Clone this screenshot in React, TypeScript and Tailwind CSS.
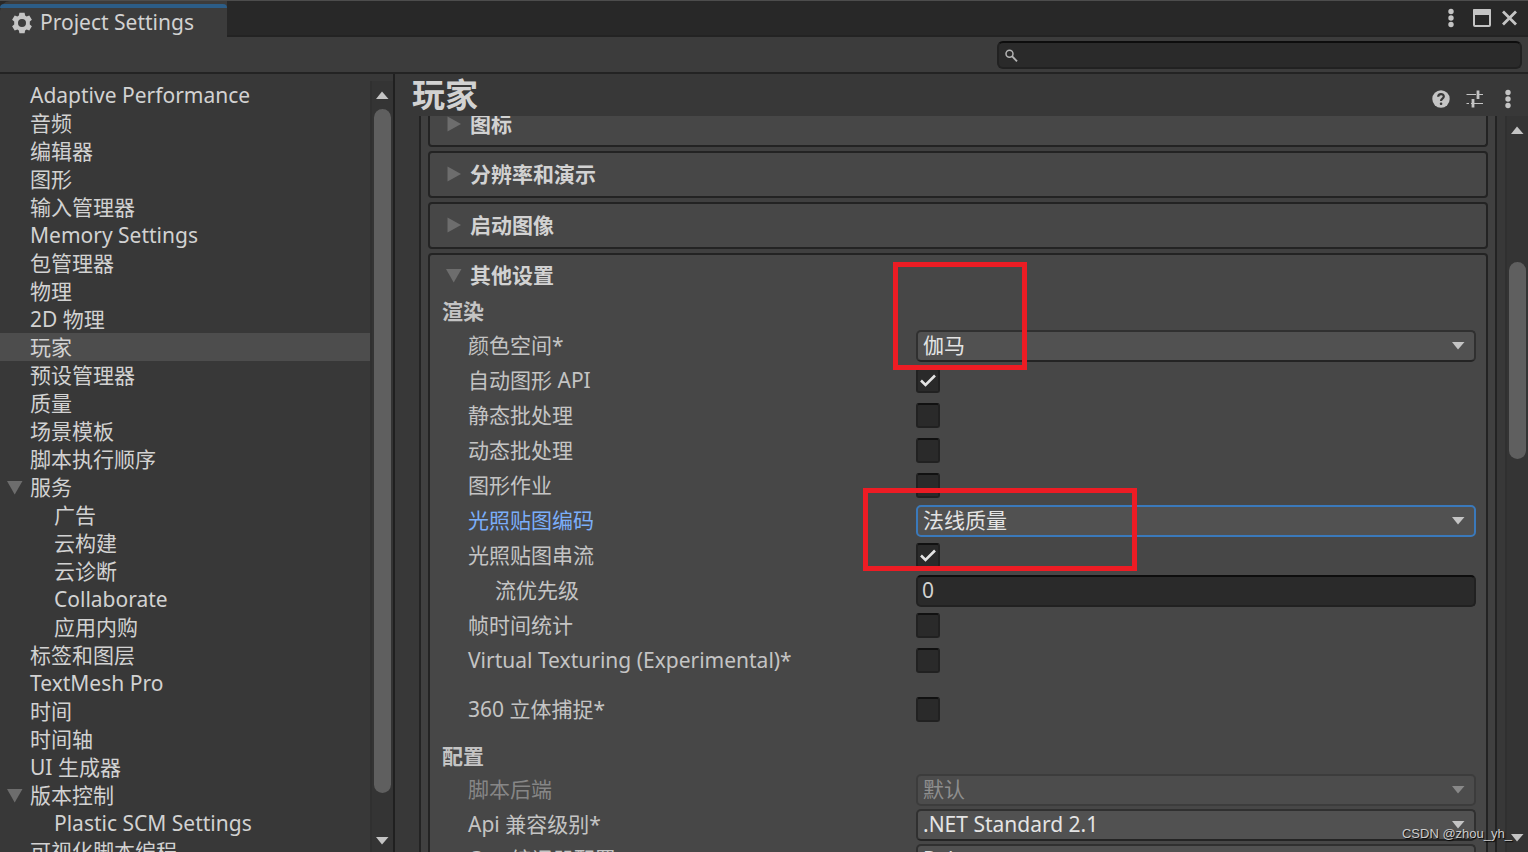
import { useState } from "react";
import type { ReactNode } from "react";

type NavItem = { label: string; level?: number; open?: boolean };

const NAV: NavItem[] = [
  { label: "Adaptive Performance" },
  { label: "音频" },
  { label: "编辑器" },
  { label: "图形" },
  { label: "输入管理器" },
  { label: "Memory Settings" },
  { label: "包管理器" },
  { label: "物理" },
  { label: "2D 物理" },
  { label: "玩家" },
  { label: "预设管理器" },
  { label: "质量" },
  { label: "场景模板" },
  { label: "脚本执行顺序" },
  { label: "服务", open: true },
  { label: "广告", level: 1 },
  { label: "云构建", level: 1 },
  { label: "云诊断", level: 1 },
  { label: "Collaborate", level: 1 },
  { label: "应用内购", level: 1 },
  { label: "标签和图层" },
  { label: "TextMesh Pro" },
  { label: "时间" },
  { label: "时间轴" },
  { label: "UI 生成器" },
  { label: "版本控制", open: true },
  { label: "Plastic SCM Settings", level: 1 },
  { label: "可视化脚本编程" },
];

function GearIcon() {
  return (
    <svg width="22" height="22" viewBox="0 0 22 22" fill="#c4c4c4" aria-hidden="true">
      <path
        fillRule="evenodd"
        d="M8.4 0.800h5.200l.5 2.700 1.500.9 2.700-1 2.600 4.300-2.100 1.800v3l2.100 1.800-2.600 4.300-2.700-1-1.500.9-.5 2.700H8.400l-.5-2.700-1.500-.9-2.700 1-2.600-4.300 2.100-1.800v-3L1.100 7.700l2.600-4.300 2.700 1 1.500-.9zM11 7a4 4 0 1 0 0 8a4 4 0 0 0 0-8z"
      />
    </svg>
  );
}

function Dots() {
  return (
    <svg width="6" height="20" viewBox="0 0 6 20" fill="#c4c4c4" aria-hidden="true">
      <circle cx="3" cy="3.500" r="2.700" />
      <circle cx="3" cy="10" r="2.700" />
      <circle cx="3" cy="16.500" r="2.700" />
    </svg>
  );
}

function Foldout({ open }: { open?: boolean }) {
  return (
    <svg width="16" height="16" viewBox="0 0 16 16" fill="#6d6d6d" className="shrink-0" aria-hidden="true">
      {open ? <path d="M0 2h15.500L7.700 15.500z" /> : <path d="M1.500 0.500v15L15 8z" />}
    </svg>
  );
}

function Caret({ up, className = "" }: { up?: boolean; className?: string }) {
  return (
    <svg width="13" height="8" viewBox="0 0 13 8" fill="#c4c4c4" className={className} aria-hidden="true">
      {up ? <path d="M0 8L6 0.500L12.500 8z" /> : <path d="M0 0L6 7.500L12.500 0z" />}
    </svg>
  );
}

function CheckBox({ id, initial }: { id: string; initial?: boolean }) {
  const [on, setOn] = useState(!!initial);
  return (
    <span className="mt-[3px] grid">
      <input
        id={id}
        type="checkbox"
        checked={on}
        onChange={(e) => setOn(e.target.checked)}
        className="col-start-1 row-start-1 h-[25px] w-6 appearance-none rounded-[3px] border-2 border-[#212121] border-t-[#111111] bg-[#2a2a2a]"
      />
      {on && (
        <svg
          width="24"
          height="25"
          viewBox="0 0 24 25"
          className="pointer-events-none col-start-1 row-start-1"
          aria-hidden="true"
        >
          <path d="M5 12.500L9.500 17L19 7.500" fill="none" stroke="#e4e4e4" strokeWidth="2.600" />
        </svg>
      )}
    </span>
  );
}

function Dropdown({ id, value, focused, disabled }: { id: string; value: string; focused?: boolean; disabled?: boolean }) {
  const tone = disabled
    ? "border-[#3c3c3c] bg-[#4c4c4c] text-[#8e8e8e]"
    : focused
      ? "border-[#3a79bb] bg-[#515151] text-[#e4e4e4]"
      : "border-[#303030] border-b-[#242424] bg-[#515151] text-[#e4e4e4]";
  return (
    <span className="grid flex-1 items-center">
      <select
        id={id}
        disabled={disabled}
        className={`col-start-1 row-start-1 h-8 w-full appearance-none rounded-[5px] border-2 px-[5px] pb-[2px] leading-[26px] opacity-100 outline-none ${tone}`}
      >
        <option>{value}</option>
      </select>
      <Caret
        className={`pointer-events-none col-start-1 row-start-1 mr-[11px] justify-self-end ${disabled ? "opacity-50" : ""}`}
      />
    </span>
  );
}

function Row({
  id,
  label,
  tone = "text-[#c4c4c4]",
  indent,
  children,
}: {
  id: string;
  label: string;
  tone?: string;
  indent?: boolean;
  children: ReactNode;
}) {
  return (
    <div className="flex h-8 items-start">
      <label htmlFor={id} className={`w-[486px] shrink-0 leading-[30px] ${indent ? "pl-[65px]" : "pl-[38px]"} ${tone}`}>
        {label}
      </label>
      {children}
    </div>
  );
}

function Section({ title, className = "" }: { title: string; className?: string }) {
  return (
    <section className={`flex shrink-0 items-center rounded-[4px] border-2 border-[#232323] bg-[#474747] ${className}`}>
      <button type="button" className="flex flex-1 items-center gap-2 pl-4 text-left font-bold text-[#d2d2d2]">
        <Foldout />
        {title}
      </button>
    </section>
  );
}

function ScrollBar({ children, downHeight = "h-7" }: { children: ReactNode; downHeight?: string }) {
  return (
    <div className="flex w-[23px] shrink-0 flex-col items-center border-l-2 border-[#303030] bg-[#343434]">
      <button type="button" aria-label="向上滚动" className="flex h-7 shrink-0 items-center justify-center">
        <Caret up />
      </button>
      {children}
      <button type="button" aria-label="向下滚动" className={`flex shrink-0 items-center justify-center ${downHeight}`}>
        <Caret />
      </button>
    </div>
  );
}

export default function App() {
  const [selected, setSelected] = useState("玩家");
  return (
    <div className="relative flex h-screen flex-col overflow-hidden bg-[#383838] font-['Noto_Sans','Noto_Sans_CJK_SC',sans-serif] text-[21px] leading-7 whitespace-nowrap text-[#d2d2d2]">
      <header className="flex h-[37px] shrink-0 border-t border-[#4d4d4d] bg-[#282828]">
        <div className="flex w-[227px] flex-col rounded-tl-[10px] bg-[#3c3c3c] pt-[3px]">
          <div className="h-1 shrink-0 rounded-t-[4px] bg-[#2c5d87]" />
          <div className="flex flex-1 items-center gap-[7px] pb-[2px] pl-[11px]">
            <GearIcon />
            <h1 className="pb-[2px]">Project Settings</h1>
          </div>
        </div>
        <div className="flex flex-1 items-center justify-end border-b-2 border-[#232323] pr-[11px]">
          <button type="button" aria-label="菜单" className="mr-[19px]">
            <Dots />
          </button>
          <button type="button" aria-label="最大化" className="mr-[11px]">
            <svg width="18" height="18" viewBox="0 0 18 18" aria-hidden="true">
              <rect x="1" y="1" width="16" height="16" rx="1" fill="none" stroke="#c4c4c4" strokeWidth="2" />
              <rect x="0" y="0" width="18" height="6" rx="1" fill="#c4c4c4" />
            </svg>
          </button>
          <button type="button" aria-label="关闭">
            <svg width="15" height="16" viewBox="0 0 15 16" aria-hidden="true">
              <path d="M1 1.500L14 14.500M14 1.500L1 14.500" stroke="#c4c4c4" strokeWidth="2.800" />
            </svg>
          </button>
        </div>
      </header>

      <div className="flex h-[37px] shrink-0 items-start justify-end border-b-2 border-[#232323] bg-[#3c3c3c] pt-1 pr-[6px]">
        <div className="flex h-7 w-[525px] items-center rounded-[6px] border-2 border-[#212121] border-t-[#0d0d0d] bg-[#2a2a2a] pl-[6px]">
          <svg width="13" height="13" viewBox="0 0 13 13" fill="none" stroke="#b4b4b4" aria-hidden="true">
            <circle cx="4.500" cy="4.700" r="3.500" strokeWidth="1.500" />
            <path d="M7 7.200L12 12.300" strokeWidth="1.900" />
          </svg>
          <input type="search" aria-label="搜索" className="ml-2 h-6 min-w-0 flex-1 bg-transparent text-base outline-none" />
        </div>
      </div>

      <div className="flex min-h-0 flex-1">
        <aside className="flex w-[395px] shrink-0 border-r-2 border-[#202020] pt-[7px]">
          <nav className="flex flex-1 flex-col overflow-hidden">
            {NAV.map((item) => (
              <button
                key={item.label}
                type="button"
                onClick={() => setSelected(item.label)}
                className={`flex h-7 shrink-0 items-center text-left ${item.level ? "pl-[54px]" : item.open ? "gap-[7px] pl-[7px]" : "pl-[30px]"} ${selected === item.label ? "bg-[#4d4d4d]" : ""}`}
              >
                {item.open && <Foldout open />}
                {item.label}
              </button>
            ))}
          </nav>
          <ScrollBar downHeight="h-[22px]">
            <div className="w-[17px] flex-1 rounded-full bg-[#5f5f5f]" />
            <div className="h-[37px] shrink-0" />
          </ScrollBar>
        </aside>

        <main className="flex min-w-0 flex-1 flex-col">
          <div className="flex h-[42px] shrink-0 items-center pr-[17px] pl-[17px]">
            <h2 className="flex-1 text-[33px] leading-[42px] font-bold">玩家</h2>
            <div className="flex items-center pt-2">
              <button type="button" aria-label="帮助" className="mr-4">
                <svg width="18" height="18" viewBox="0 0 18 18" aria-hidden="true">
                  <circle cx="9" cy="9" r="8.700" fill="#c4c4c4" />
                  <path
                    d="M6.200 6.800C6.200 3.200 11.800 3.200 11.800 6.600C11.800 8.700 9 8.700 9 11"
                    fill="none"
                    stroke="#383838"
                    strokeWidth="2.200"
                  />
                  <rect x="7.800" y="12.600" width="2.500" height="2.500" rx="1" fill="#383838" />
                </svg>
              </button>
              <button type="button" aria-label="预设" className="mr-[21px]">
                <svg width="18" height="18" viewBox="0 0 18 18" stroke="#c4c4c4" fill="none" aria-hidden="true">
                  <path d="M0.500 4.500H10M13 4.500H17M0.500 13.500H3M5 13.500H17" strokeWidth="1.200" />
                  <path d="M12 0.500V9M7 9V17.500" strokeWidth="2.800" />
                </svg>
              </button>
              <button type="button" aria-label="更多">
                <Dots />
              </button>
            </div>
          </div>

          <div className="flex min-h-0 flex-1">
            <div className="mr-2 ml-6 flex min-w-0 flex-1 flex-col gap-1 overflow-hidden border-x-2 border-[#232323] bg-[#404040] px-[7px]">
              <Section title="图标" className="h-[31px] rounded-t-none border-t-0 pb-[14px]" />
              <Section title="分辨率和演示" className="h-[47px] pb-px" />
              <Section title="启动图像" className="h-[47px] pb-px" />
              <section className="flex shrink-0 flex-col rounded-t-[4px] border-2 border-[#232323] bg-[#474747]">
                <button type="button" className="mt-[6px] flex h-7 items-center gap-2 pl-4 text-left font-bold">
                  <Foldout open />
                  其他设置
                </button>
                <h3 className="mt-2 mb-[5px] pl-3 font-bold text-[#c4c4c4]">渲染</h3>
                <div className="flex flex-col gap-[3px] pr-[10px]">
                  <Row id="color-space" label="颜色空间*">
                    <Dropdown id="color-space" value="伽马" />
                  </Row>
                  <Row id="auto-api" label="自动图形 API">
                    <CheckBox id="auto-api" initial />
                  </Row>
                  <Row id="static-batch" label="静态批处理">
                    <CheckBox id="static-batch" />
                  </Row>
                  <Row id="dynamic-batch" label="动态批处理">
                    <CheckBox id="dynamic-batch" />
                  </Row>
                  <Row id="graphics-jobs" label="图形作业">
                    <CheckBox id="graphics-jobs" />
                  </Row>
                  <Row id="lightmap-encoding" label="光照贴图编码" tone="text-[#7baefa]">
                    <Dropdown id="lightmap-encoding" value="法线质量" focused />
                  </Row>
                  <Row id="lightmap-streaming" label="光照贴图串流">
                    <CheckBox id="lightmap-streaming" initial />
                  </Row>
                  <Row id="stream-priority" label="流优先级" indent>
                    <input
                      id="stream-priority"
                      type="text"
                      defaultValue="0"
                      className="h-8 min-w-0 flex-1 rounded-[5px] border-2 border-[#212121] border-t-[#0d0d0d] bg-[#2a2a2a] px-1 pb-[2px] outline-none"
                    />
                  </Row>
                  <Row id="frame-timing" label="帧时间统计">
                    <CheckBox id="frame-timing" />
                  </Row>
                  <Row id="virtual-texturing" label="Virtual Texturing (Experimental)*">
                    <CheckBox id="virtual-texturing" />
                  </Row>
                  <div className="mt-[14px]">
                    <Row id="stereo-capture" label="360 立体捕捉*">
                      <CheckBox id="stereo-capture" />
                    </Row>
                  </div>
                </div>
                <h3 className="mt-4 mb-1 pl-3 font-bold text-[#c4c4c4]">配置</h3>
                <div className="flex flex-col gap-[3px] pr-[10px]">
                  <Row id="scripting-backend" label="脚本后端" tone="text-[#868686]">
                    <Dropdown id="scripting-backend" value="默认" disabled />
                  </Row>
                  <Row id="api-level" label="Api 兼容级别*">
                    <Dropdown id="api-level" value=".NET Standard 2.1" />
                  </Row>
                  <Row id="cpp-config" label="C++ 编译器配置">
                    <Dropdown id="cpp-config" value="Release" />
                  </Row>
                </div>
              </section>
            </div>
            <ScrollBar>
              <div className="h-[118px] shrink-0" />
              <div className="h-[197px] w-[17px] shrink-0 rounded-full bg-[#5f5f5f]" />
              <div className="flex-1" />
            </ScrollBar>
          </div>
        </main>
      </div>

      <div className="pointer-events-none absolute top-[262px] left-[893px] h-[108px] w-[134px] border-[5px] border-[#ed1c24]" />
      <div className="pointer-events-none absolute top-[488px] left-[863px] h-[83px] w-[274px] border-[5px] border-[#ed1c24]" />
      <p className="pointer-events-none absolute right-4 bottom-2 font-['Liberation_Sans',sans-serif] text-[13px] leading-5 text-[#cccccc] [text-shadow:1px_1px_1px_#000000]">
        CSDN @zhou_yh_
      </p>
    </div>
  );
}
